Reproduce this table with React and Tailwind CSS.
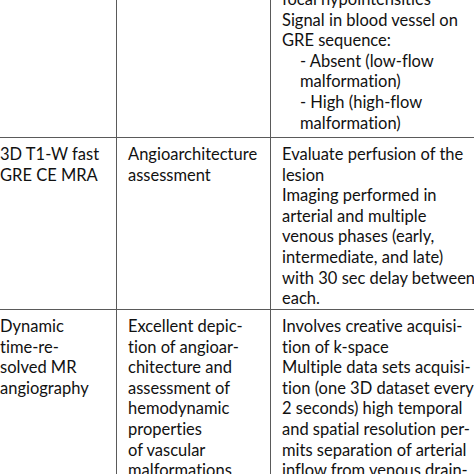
import React from "react";

const Cell = ({ lines }) => (
  <div className="px-[11px]">
    {lines.map((l, i) => (
      <div key={i} className="whitespace-nowrap">
        {l}
      </div>
    ))}
  </div>
);

export default function App() {
  return (
    <div
      className="w-[474px] h-[474px] overflow-hidden bg-white text-[#111111] text-[16.5px] leading-[20.6px] [font-variant-ligatures:none]"
      style={{ fontFamily: 'Lato, sans-serif' }}
    >
      <div className="ml-[-11px] mt-[-11px] w-[520px] grid grid-cols-[128px_154px_1fr]">
        {/* Row 1 */}
        <div className="border-r-[1.5px] border-[#5a5a5a] h-[148px]"></div>
        <div className="border-r-[1.5px] border-[#5a5a5a]"></div>
        <div className="px-[11px] pt-0">
          <div className="whitespace-nowrap">focal hypointensities</div>
          <div className="whitespace-nowrap">Signal in blood vessel on</div>
          <div className="whitespace-nowrap">GRE sequence:</div>
          <div className="whitespace-nowrap pl-[18px]">- Absent (low-flow</div>
          <div className="whitespace-nowrap pl-[18px]">malformation)</div>
          <div className="whitespace-nowrap pl-[18px]">- High (high-flow</div>
          <div className="whitespace-nowrap pl-[18px]">malformation)</div>
        </div>
        {/* Row 2 */}
        <div className="border-t-[1.5px] border-r-[1.5px] border-[#5a5a5a] h-[172px] pt-[6px]">
          <Cell lines={["3D T1-W fast", "GRE CE MRA"]} />
        </div>
        <div className="border-t-[1.5px] border-r-[1.5px] border-[#5a5a5a] pt-[6px]">
          <Cell lines={["Angioarchitecture", "assessment"]} />
        </div>
        <div className="border-t-[1.5px] border-[#5a5a5a] pt-[6px]">
          <Cell
            lines={[
              "Evaluate perfusion of the",
              "lesion",
              "Imaging performed in",
              "arterial and multiple",
              "venous phases (early,",
              "intermediate, and late)",
              "with 30 sec delay between",
              "each.",
            ]}
          />
        </div>
        {/* Row 3 */}
        <div className="border-t-[1.5px] border-r-[1.5px] border-[#5a5a5a] h-[200px] pt-[6px]">
          <Cell lines={["Dynamic", "time-re-", "solved MR", "angiography"]} />
        </div>
        <div className="border-t-[1.5px] border-r-[1.5px] border-[#5a5a5a] pt-[6px]">
          <Cell
            lines={[
              "Excellent depic-",
              "tion of angioar-",
              "chitecture and",
              "assessment of",
              "hemodynamic",
              "properties",
              "of vascular",
              "malformations",
            ]}
          />
        </div>
        <div className="border-t-[1.5px] border-[#5a5a5a] pt-[6px]">
          <Cell
            lines={[
              "Involves creative acquisi-",
              "tion of k-space",
              "Multiple data sets acquisi-",
              "tion (one 3D dataset every",
              "2 seconds) high temporal",
              "and spatial resolution per-",
              "mits separation of arterial",
              "inflow from venous drain-",
            ]}
          />
        </div>
      </div>
    </div>
  );
}
